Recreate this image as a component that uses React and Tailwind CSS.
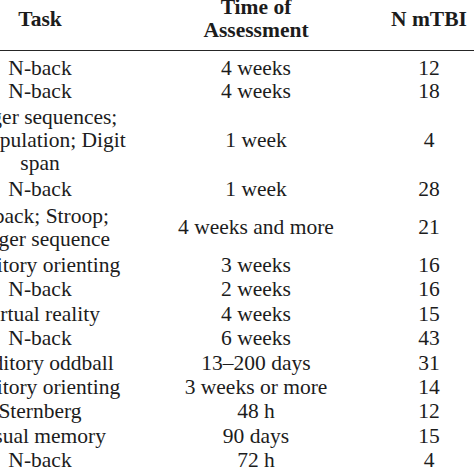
import React from "react";

const rows = [
  { task: ["N-back"], time: "4 weeks", n: "12", h: "h-[23.5px]" },
  { task: ["N-back"], time: "4 weeks", n: "18", h: "h-[23.5px]" },
  { task: ["Finger sequences;", "Manipulation; Digit", "span"], time: "1 week", n: "4", h: "h-[74px]" },
  { task: ["N-back"], time: "1 week", n: "28", h: "h-[25px]" },
  { task: ["N-back; Stroop;", "Finger sequence"], time: "4 weeks and more", n: "21", h: "h-[50.8px]" },
  { task: ["Auditory orienting"], time: "3 weeks", n: "16", h: "h-[24.4px]" },
  { task: ["N-back"], time: "2 weeks", n: "16", h: "h-[24.4px]" },
  { task: ["Virtual reality"], time: "4 weeks", n: "15", h: "h-[24.4px]" },
  { task: ["N-back"], time: "6 weeks", n: "43", h: "h-[24.4px]" },
  { task: ["Auditory oddball"], time: "13–200 days", n: "31", h: "h-[24.4px]" },
  { task: ["Auditory orienting"], time: "3 weeks or more", n: "14", h: "h-[24.4px]" },
  { task: ["Sternberg"], time: "48 h", n: "12", h: "h-[24.4px]" },
  { task: ["Visual memory"], time: "90 days", n: "15", h: "h-[24.4px]" },
  { task: ["N-back"], time: "72 h", n: "4", h: "h-[24.4px]" },
];

function Cell({ children }) {
  return (
    <div className="flex flex-col items-center justify-center min-w-0">
      <div className="whitespace-nowrap text-center leading-[23.3px]">{children}</div>
    </div>
  );
}

export default function App() {
  return (
    <div className="w-[474px] h-[474px] overflow-hidden bg-white relative">
      <div className="ml-[-120px] mt-[-3.9px] w-[666px] text-[21.5px] text-[#1c1c1c] font-['Liberation_Serif','DejaVu_Serif',serif]">
        <div className="grid grid-cols-[320px_112px_234px] pb-[6.8px] border-b-[1.5px] border-[#262626] font-bold">
          <Cell>Task</Cell>
          <Cell>
            Time of
            <br />
            Assessment
          </Cell>
          <Cell>N mTBI</Cell>
        </div>
        <div className="pt-[6.1px]">
          {rows.map((r, i) => (
            <div key={i} className={"grid grid-cols-[320px_112px_234px] " + r.h}>
              <Cell>
                {r.task.map((t, j) => (
                  <React.Fragment key={j}>
                    {j > 0 && <br />}
                    {t}
                  </React.Fragment>
                ))}
              </Cell>
              <Cell>{r.time}</Cell>
              <Cell>{r.n}</Cell>
            </div>
          ))}
        </div>
      </div>
    </div>
  );
}
